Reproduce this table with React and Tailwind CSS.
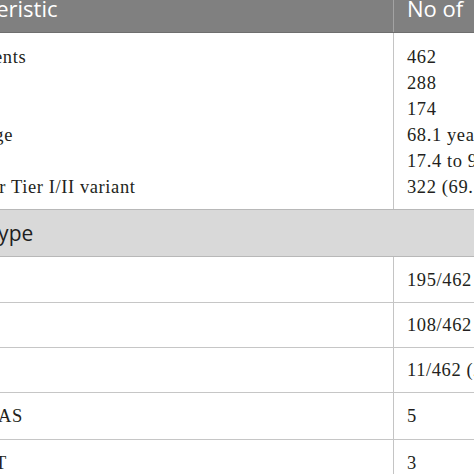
import React from "react";

const topLeft = ["No of patients", "Male", "Female", "Patients' age", "Range", "Positive for Tier I/II variant"];
const topRight = ["462", "288", "174", "68.1 years", "17.4 to 93.0", "322 (69.7%)"];
const lowerRows = [
  { l: "NSCLC", r: "195/462 (42.2%)", h: "h-[45px]" },
  { l: "CRC", r: "108/462 (23.4%)", h: "h-[44px]" },
  { l: "Other", r: "11/462 (2.4%)", h: "h-[44px]" },
  { l: "Other ATLAS", r: "5", h: "h-[46px]" },
  { l: "Other GIST", r: "3", h: "h-[46px]" },
];

export default function App() {
  return (
    <div className="w-[474px] h-[474px] overflow-hidden bg-white">
      <div className="-ml-[99px] w-[660px] flex flex-col text-[#231f20]">
        {/* header */}
        <div className="flex h-[33px] overflow-hidden bg-[#808080] border-b border-[#6e6e6e] font-['Open_Sans',sans-serif] text-[22px] leading-[40px] text-white">
          <div className="w-[493px] shrink-0 border-r border-[#a3a3a3] pl-[16px] whitespace-nowrap">
            <div className="-mt-[12px]">Characteristic</div>
          </div>
          <div className="pl-[13px] w-[80px]">
            <div className="-mt-[12px]">No of patients</div>
          </div>
        </div>
        {/* top body */}
        <div className="flex font-['Liberation_Serif',serif] text-[18.5px] tracking-[0.6px] leading-[26px]">
          <div className="w-[493px] shrink-0 border-r border-[#c4c4c4] pl-[12px] pt-[11px] pb-[9px]">
            {topLeft.map((t) => (
              <div key={t} className="h-[26px] whitespace-nowrap">{t}</div>
            ))}
          </div>
          <div className="pl-[13px] pt-[11px] pb-[9px]">
            {topRight.map((t) => (
              <div key={t} className="h-[26px] whitespace-nowrap">{t}</div>
            ))}
          </div>
        </div>
        {/* band */}
        <div className="h-[48px] bg-[#d9d9d9] border-y border-[#b8b8b8] pl-[15px] font-['Open_Sans',sans-serif] text-[21px] leading-[46px] text-[#1e1e1e] whitespace-nowrap">
          Tumor Type
        </div>
        {/* lower rows */}
        {lowerRows.map((row, i) => (
          <div
            key={row.l}
            className={`flex font-['Liberation_Serif',serif] text-[18.5px] tracking-[0.6px] leading-[26px] ${i < lowerRows.length - 1 ? "border-b border-[#c6c6c6]" : ""}`}
          >
            <div className={`w-[493px] shrink-0 border-r border-[#c4c4c4] pl-[12px] flex items-center whitespace-nowrap ${row.h}`}>
              {row.l}
            </div>
            <div className={`pl-[13px] flex items-center whitespace-nowrap ${row.h}`}>{row.r}</div>
          </div>
        ))}
      </div>
    </div>
  );
}
